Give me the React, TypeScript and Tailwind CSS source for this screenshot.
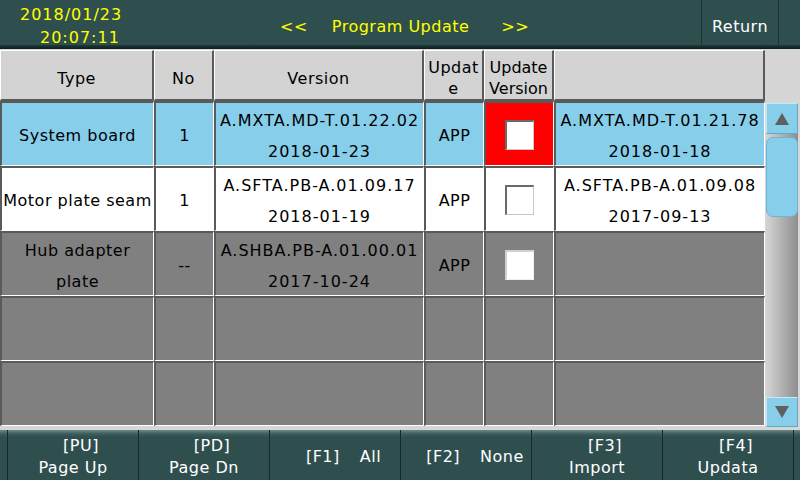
import React from 'react';

const sunk =
  'border-t-2 border-l-2 border-r border-b border-t-[#5a5a5a] border-l-[#5a5a5a] border-r-white border-b-white';
const raised =
  'border-t border-l border-r-2 border-b-2 border-t-white border-l-white border-r-[#5a5a5a] border-b-[#5a5a5a]';

type Row = {
  bg: string;
  type?: string[];
  no?: string;
  ver?: string[];
  upd?: string;
  check?: 'red' | 'plain' | 'gray';
  cur?: string[];
};

const ROWS: Row[] = [
  {
    bg: 'bg-[#87ceeb]',
    type: ['System board'],
    no: '1',
    ver: ['A.MXTA.MD-T.01.22.02', '2018-01-23'],
    upd: 'APP',
    check: 'red',
    cur: ['A.MXTA.MD-T.01.21.78', '2018-01-18'],
  },
  {
    bg: 'bg-white',
    type: ['Motor plate seam'],
    no: '1',
    ver: ['A.SFTA.PB-A.01.09.17', '2018-01-19'],
    upd: 'APP',
    check: 'plain',
    cur: ['A.SFTA.PB-A.01.09.08', '2017-09-13'],
  },
  {
    bg: 'bg-[#808080]',
    type: ['Hub adapter', 'plate'],
    no: '--',
    ver: ['A.SHBA.PB-A.01.00.01', '2017-10-24'],
    upd: 'APP',
    check: 'gray',
  },
  { bg: 'bg-[#808080]' },
  { bg: 'bg-[#808080]' },
];

const BUTTONS = [
  { top: '[PU]', bottom: 'Page Up' },
  { top: '[PD]', bottom: 'Page Dn' },
  { key: '[F1]', label: 'All', pad: 'pl-[17px]' },
  { key: '[F2]', label: 'None', pad: 'pl-[18px]' },
  { top: '[F3]', bottom: 'Import' },
  { top: '[F4]', bottom: 'Updata' },
];

const Lines: React.FC<{ lines?: string[]; wide?: boolean }> = ({ lines, wide }) => (
  <div
    className={`flex flex-col items-center leading-[31px] pt-[3px] whitespace-nowrap ${wide ? 'tracking-[1px]' : ''}`}
  >
    {lines?.map((l) => (
      <span key={l}>{l}</span>
    ))}
  </div>
);

const Checkbox: React.FC<{ kind: 'red' | 'plain' | 'gray' }> = ({ kind }) => {
  if (kind === 'gray') {
    return (
      <div className="w-[29px] h-[30px] bg-white border-t-2 border-l-2 border-r border-b border-t-[#d0d0d0] border-l-[#d0d0d0] border-r-[#f0f0f0] border-b-[#f0f0f0]" />
    );
  }
  return (
    <div className="w-[29px] h-[30px] bg-white border-t-2 border-l-2 border-r border-b border-t-[#6a6a6a] border-l-[#6a6a6a] border-r-[#c8c8c8] border-b-[#c8c8c8]" />
  );
};

const Triangle: React.FC<{ down?: boolean }> = ({ down }) => (
  <svg width="14" height="12" viewBox="0 0 14 12">
    <polygon points={down ? '0,0 14,0 7,12' : '7,0 14,12 0,12'} fill="#5f5f5f" />
  </svg>
);

export default function App() {
  return (
    <div className="w-[800px] h-[480px] flex flex-col bg-[#d6d6d6] overflow-hidden font-['DejaVu_Sans',sans-serif] text-[16px] tracking-[0.5px]">
      {/* Title bar */}
      <div className="h-[45px] flex bg-[#2f4f4f]">
        <div className="w-[280px] pl-[20px] pt-[3px] leading-[23px] text-[#ffff00] tracking-[1px]">
          <div>2018/01/23</div>
          <div className="pl-[20px]">20:07:11</div>
        </div>
        <div className="flex-1 flex items-center pt-[8px] text-[#ffff00]">
          <span>&lt;&lt;</span>
          <span className="ml-[24px]">Program Update</span>
          <span className="ml-[32px]">&gt;&gt;</span>
        </div>
        <div className="w-[78px] flex items-center justify-center pt-[8px] text-white border-l border-r border-[#183232]">
          Return
        </div>
        <div className="w-[21px]" />
      </div>
      <div className="h-[4px] bg-[linear-gradient(to_bottom,#1f3b3b,#0c1c1c)]" />

      {/* Table + scrollbar */}
      <div className="mt-[1px] flex h-[376px]">
        <div className="w-[765px] grid grid-cols-[154px_60px_210px_60px_70px_211px] grid-rows-[51px_65px_65px_65px_65px_65px] text-black">
          <div className={`${raised} bg-[#d3d3d3] flex items-center justify-center pt-[8px]`}>Type</div>
          <div className={`${raised} bg-[#d3d3d3] flex items-center justify-center pt-[8px]`}>No</div>
          <div className={`${raised} bg-[#d3d3d3] flex items-center justify-center pt-[8px]`}>Version</div>
          <div className={`${raised} bg-[#d3d3d3] flex flex-col items-center justify-center leading-[21px] pt-[6px]`}>
            <span>Updat</span>
            <span>e</span>
          </div>
          <div className={`${raised} bg-[#d3d3d3] flex flex-col items-center justify-center leading-[21px] pt-[6px] tracking-normal`}>
            <span>Update</span>
            <span>Version</span>
          </div>
          <div className={`${raised} bg-[#d3d3d3]`} />

          {ROWS.map((r, i) => (
            <React.Fragment key={i}>
              <div className={`${sunk} ${r.bg} flex items-center justify-center`}>
                <Lines lines={r.type} />
              </div>
              <div className={`${sunk} ${r.bg} flex items-center justify-center pt-[3px]`}>{r.no}</div>
              <div className={`${sunk} ${r.bg} flex items-center justify-center`}>
                <Lines lines={r.ver} wide />
              </div>
              <div className={`${sunk} ${r.bg} flex items-center justify-center pt-[3px]`}>{r.upd}</div>
              <div
                className={`${sunk} ${r.check === 'red' ? 'bg-[#ff0000]' : r.bg} flex items-center justify-center pt-[2px]`}
              >
                {r.check && <Checkbox kind={r.check} />}
              </div>
              <div className={`${sunk} ${r.bg} flex items-center justify-center`}>
                <Lines lines={r.cur} wide />
              </div>
            </React.Fragment>
          ))}
        </div>

        {/* Scrollbar */}
        <div className="w-[35px] pt-[53px] pl-[1px]">
          <div className="w-[32px] h-[324px] flex flex-col">
            <div className="h-[31px] flex items-center justify-center bg-[#87ceeb] border border-t-[#c4eaf7] border-l-[#c4eaf7] border-b-[#5fa9c8] border-r-[#5fa9c8]">
              <Triangle />
            </div>
            <div className="flex-1 bg-[linear-gradient(to_right,#d4d4d4,#8e8e8e)] pt-[3px]">
              <div className="h-[80px] rounded-[7px] bg-[#87ceeb] border border-[#6bb6d6]" />
            </div>
            <div className="h-[30px] flex items-center justify-center bg-[#87ceeb] border border-t-[#c4eaf7] border-l-[#c4eaf7] border-b-[#5fa9c8] border-r-[#5fa9c8]">
              <Triangle down />
            </div>
          </div>
        </div>
      </div>

      {/* Function keys */}
      <div className="mt-auto h-[50px] flex bg-[#2f4f4f] text-white">
        <div className="w-[7px] bg-[linear-gradient(to_bottom,#6a8a8a_0px,#3c5c5c_4px,#2f4f4f_7px)]" />
        {BUTTONS.map((b, i) => (
          <div
            key={i}
            className="w-[131px] border-l border-[#142a2a] bg-[linear-gradient(to_bottom,#6a8a8a_0px,#3c5c5c_4px,#2f4f4f_7px)] flex flex-col items-center justify-center leading-[22px] pt-[4px]"
          >
            {b.key ? (
              <div className={`flex ${b.pad}`}>
                <span>{b.key}</span>
                <span className="ml-[20px]">{b.label}</span>
              </div>
            ) : (
              <>
                <span className="pl-[16px]">{b.top}</span>
                <span>{b.bottom}</span>
              </>
            )}
          </div>
        ))}
        <div className="flex-1 border-l border-[#142a2a] bg-[linear-gradient(to_bottom,#6a8a8a_0px,#3c5c5c_4px,#2f4f4f_7px)]" />
      </div>
    </div>
  );
}
